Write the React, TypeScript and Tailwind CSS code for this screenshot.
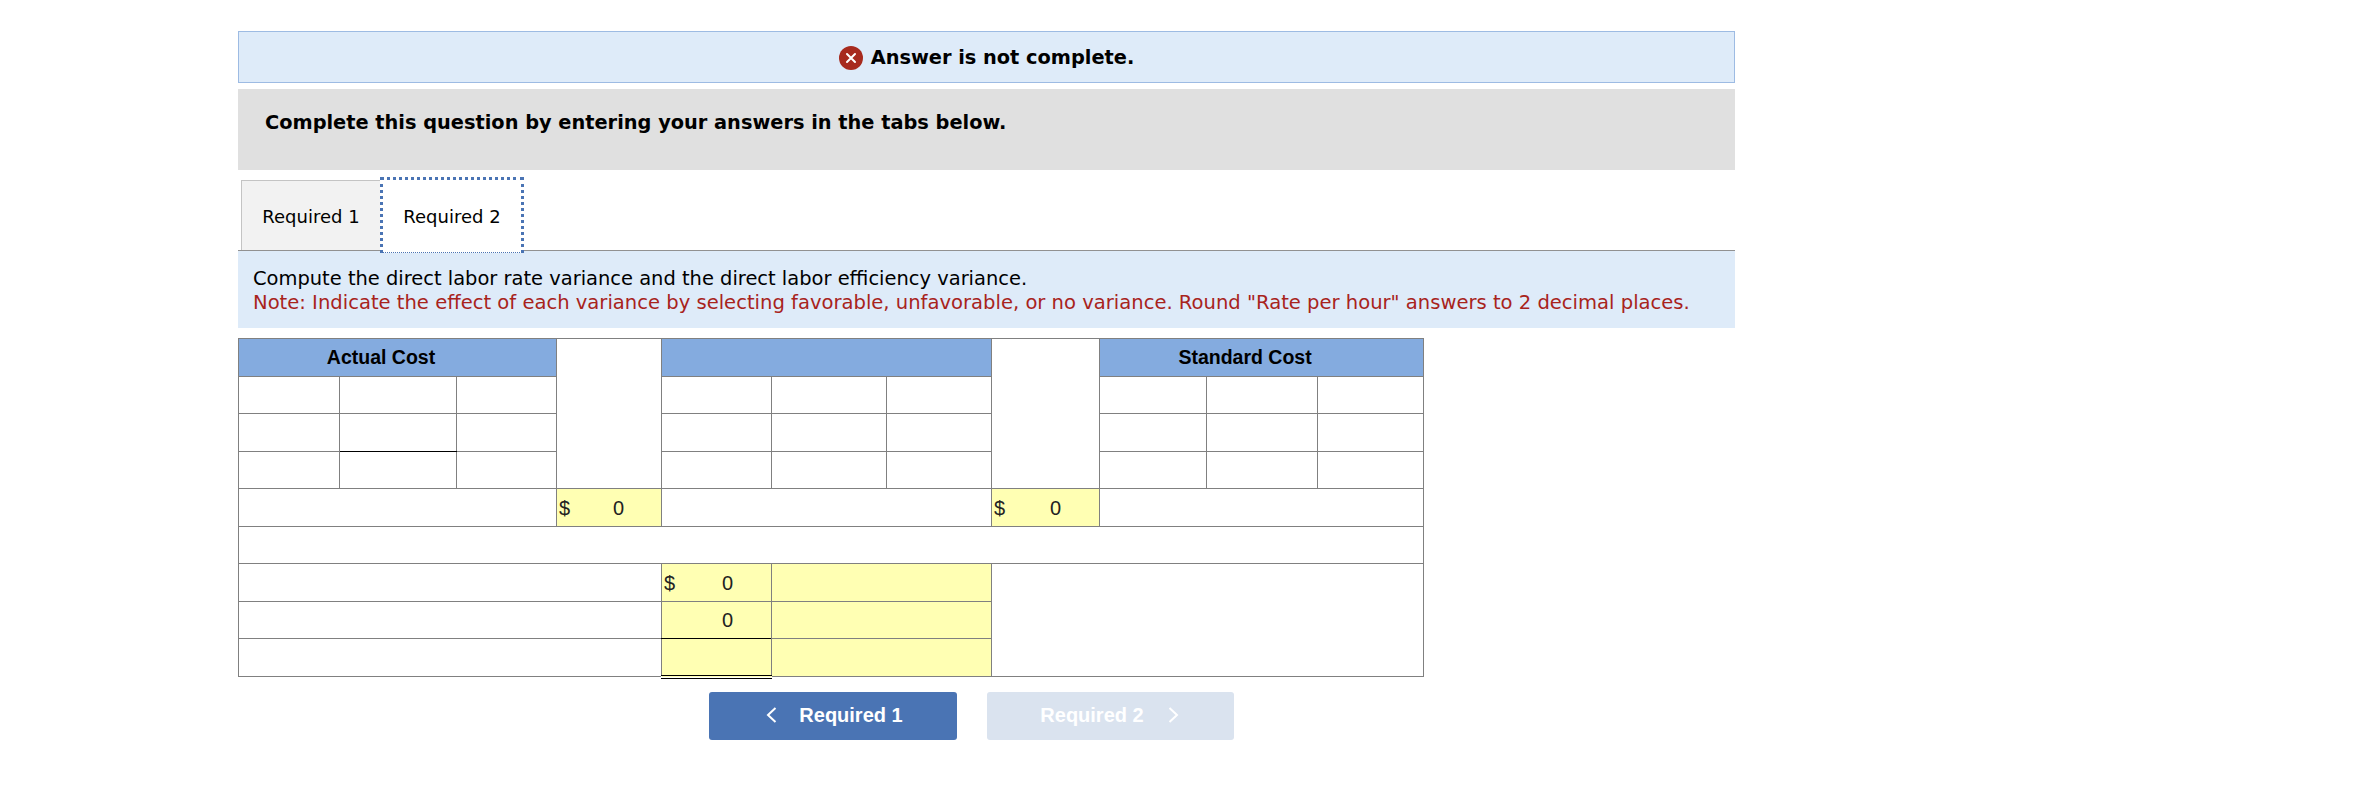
const gridLine = 'border border-[#808080]';
const yellow = 'border border-[#808080] bg-[#ffffb3]';

const Money = (props: { dollar?: boolean; pad: string }) => {
  return (
    <div className={`flex justify-between pl-[2px] text-[20px] leading-none text-[#222] ${props.pad}`}>
      <span>{props.dollar ? '$' : ''}</span>
      <span>0</span>
    </div>
  );
};

const Chevron = (props: { dir: 'left' | 'right' }) => {
  return (
    <svg width="11" height="16" viewBox="0 0 11 16" fill="none" stroke="currentColor" strokeWidth="2">
      <polyline points={props.dir === 'left' ? '9.5,1 2,8 9.5,15' : '1.5,1 9,8 1.5,15'} />
    </svg>
  );
};

const CostRows = () => {
  return (
    <>
      <td className={gridLine}></td>
      <td className={gridLine}></td>
      <td className={gridLine}></td>
    </>
  );
};

export default function App() {
  return (
    <div className="min-h-[804px] bg-white pl-[238px] pt-[31px] font-['DejaVu_Sans',sans-serif] text-black">
      <div className="w-[1497px]">
        <div className="flex h-[52px] items-center justify-center gap-2 border border-[#9dbbe3] bg-[#deebf9]">
          <svg width="24" height="24" viewBox="0 0 24 24" className="mt-[1px]">
            <circle cx="12" cy="12" r="12" fill="#a72a1e" />
            <path d="M8 8l8 8M16 8l-8 8" stroke="#fff" strokeWidth="2" strokeLinecap="round" />
          </svg>
          <span className="mt-[2px] text-[19.35px] font-bold">Answer is not complete.</span>
        </div>

        <div className="mt-[6px] h-[81px] bg-[#e0e0e0] px-[27px] pt-[22px] text-[19.35px] font-bold leading-[24px]">
          Complete this question by entering your answers in the tabs below.
        </div>

        <div className="mt-[10px] flex h-[70px] items-stretch pl-[3px] text-[18px]">
          <div className="flex w-[140px] items-center justify-center border border-b-0 border-[#c4c4c4] bg-[#f2f2f2] pt-[2px]">
            Required 1
          </div>
          <div className="relative z-10 -my-[3px] -ml-[1px] flex w-[144px] items-center justify-center border-x-[3px] border-t-[3px] border-b border-dotted border-[#4a74b4] bg-white pt-[1px]">
            Required 2
          </div>
        </div>

        <div className="h-[78px] border-t border-[#919191] bg-[#deebf9] px-[15px] pt-[16px] text-[19.47px] leading-[23px]">
          <p>Compute the direct labor rate variance and the direct labor efficiency variance.</p>
          <p className="mt-[1px] text-[19.57px] text-[#a8231c]">
            Note: Indicate the effect of each variance by selecting favorable, unfavorable, or no variance. Round
            {' "'}Rate per hour{'" '}answers to 2 decimal places.
          </p>
        </div>

        <table className="mt-[10px] w-[1185px] table-fixed border-collapse font-['Liberation_Sans',sans-serif]">
          <colgroup>
            <col className="w-[101px]" />
            <col className="w-[117px]" />
            <col className="w-[100px]" />
            <col className="w-[105px]" />
            <col className="w-[110px]" />
            <col className="w-[115px]" />
            <col className="w-[105px]" />
            <col className="w-[108px]" />
            <col className="w-[107px]" />
            <col className="w-[111px]" />
            <col className="w-[106px]" />
          </colgroup>
          <tbody>
            <tr className="h-[38px]">
              <th colSpan={3} className={`${gridLine} bg-[#84abdf] pr-[33px] text-[19.5px] font-bold`}>
                Actual Cost
              </th>
              <td rowSpan={4} className={gridLine}></td>
              <th colSpan={3} className={`${gridLine} bg-[#84abdf]`}></th>
              <td rowSpan={4} className={gridLine}></td>
              <th colSpan={3} className={`${gridLine} bg-[#84abdf] pr-[33px] text-[19.5px] font-bold`}>
                Standard Cost
              </th>
            </tr>
            <tr className="h-[37px]">
              <CostRows />
              <CostRows />
              <CostRows />
            </tr>
            <tr className="h-[38px]">
              <td className={gridLine}></td>
              <td className="border border-[#808080] border-b-black"></td>
              <td className={gridLine}></td>
              <CostRows />
              <CostRows />
            </tr>
            <tr className="h-[37px]">
              <td className={gridLine}></td>
              <td className="border border-[#808080] border-t-black"></td>
              <td className={gridLine}></td>
              <CostRows />
              <CostRows />
            </tr>
            <tr className="h-[38px]">
              <td colSpan={3} className={gridLine}></td>
              <td className={yellow}>
                <Money dollar pad="pr-[37px]" />
              </td>
              <td colSpan={3} className={gridLine}></td>
              <td className={yellow}>
                <Money dollar pad="pr-[38px]" />
              </td>
              <td colSpan={3} className={gridLine}></td>
            </tr>
            <tr className="h-[37px]">
              <td colSpan={11} className={gridLine}></td>
            </tr>
            <tr className="h-[38px]">
              <td colSpan={4} className={gridLine}></td>
              <td className={yellow}>
                <Money dollar pad="pr-[38px]" />
              </td>
              <td colSpan={2} className={yellow}></td>
              <td colSpan={4} rowSpan={3} className={gridLine}></td>
            </tr>
            <tr className="h-[37px]">
              <td colSpan={4} className={gridLine}></td>
              <td className="border border-[#808080] border-b-black bg-[#ffffb3]">
                <Money pad="pr-[38px]" />
              </td>
              <td colSpan={2} className={yellow}></td>
            </tr>
            <tr className="h-[38px]">
              <td colSpan={4} className={gridLine}></td>
              <td className="border border-[#808080] border-t-black border-b-4 border-b-black border-double bg-[#ffffb3]"></td>
              <td colSpan={2} className={yellow}></td>
            </tr>
          </tbody>
        </table>

        <div className="mt-[13px] flex gap-[30px] pl-[471px] font-['Liberation_Sans',sans-serif] text-[20px] font-bold">
          <button className="flex h-[48px] w-[248px] items-center justify-center gap-[22px] rounded-[3px] bg-[#4a74b4] pb-[2px] pl-[3px] text-white">
            <Chevron dir="left" />
            Required 1
          </button>
          <button className="flex h-[48px] w-[247px] items-center justify-center gap-[24px] rounded-[3px] bg-[#dae3ef] pb-[2px] pr-[2px] text-white">
            Required 2
            <Chevron dir="right" />
          </button>
        </div>
      </div>
    </div>
  );
}
